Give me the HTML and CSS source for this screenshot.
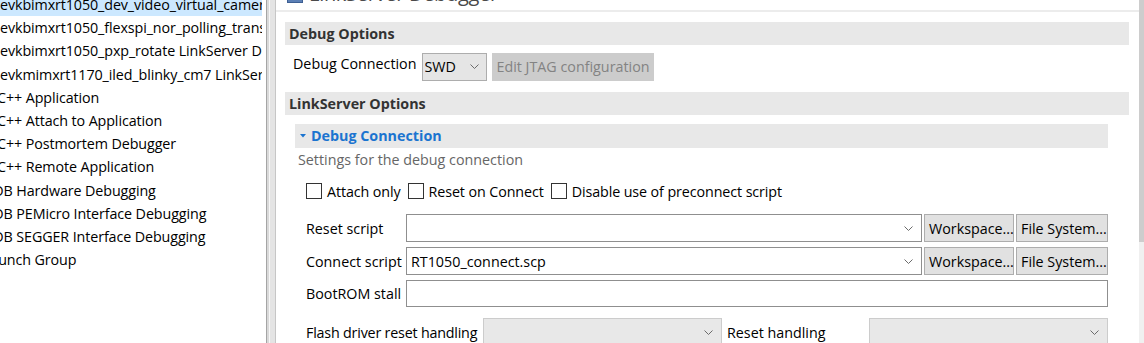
FILE: index.html
```html
<!DOCTYPE html>
<html lang="en">
<head>
<meta charset="utf-8">
<title>LinkServer Debugger</title>
<link rel="stylesheet" href="styles.css">
</head>
<body>
<div class="window">
  <aside class="tree">
    <ul class="tree-list">
      <li class="tree-item child selected">evkbimxrt1050_dev_video_virtual_camera LinkServer Debug</li>
      <li class="tree-item child">evkbimxrt1050_flexspi_nor_polling_transfer LinkServer Debug</li>
      <li class="tree-item child">evkbimxrt1050_pxp_rotate LinkServer Debug</li>
      <li class="tree-item child">evkmimxrt1170_iled_blinky_cm7 LinkServer Debug</li>
      <li class="tree-item top">C/C++ Application</li>
      <li class="tree-item top">C/C++ Attach to Application</li>
      <li class="tree-item top">C/C++ Postmortem Debugger</li>
      <li class="tree-item top">C/C++ Remote Application</li>
      <li class="tree-item top">GDB Hardware Debugging</li>
      <li class="tree-item top">GDB PEMicro Interface Debugging</li>
      <li class="tree-item top">GDB SEGGER Interface Debugging</li>
      <li class="tree-item top">Launch Group</li>
    </ul>
  </aside>
  <div class="sash"></div>
  <main class="editor">
    <header class="editor-title">
      <svg class="title-icon" width="16" height="16" viewBox="0 0 16 16"><rect x="0.5" y="0.5" width="15" height="15" fill="#5b7fb5" stroke="#3d5f93"/></svg>
      <span class="title-text">LinkServer Debugger</span>
    </header>
    <div class="editor-body">
      <div class="section-bar">Debug Options</div>
      <div class="option-row">
        <span class="option-label">Debug Connection</span>
        <div class="combo combo-swd"><span class="combo-value">SWD</span><svg class="chev" width="9" height="5" viewBox="0 0 9 5"><path d="M0.5 0.5L4.5 4.5L8.5 0.5" fill="none" stroke="#6b6b6b"/></svg></div>
        <button class="btn btn-disabled">Edit JTAG configuration</button>
      </div>
      <div class="section-bar">LinkServer Options</div>
      <section class="subsection">
        <div class="sub-bar"><svg class="twisty" width="6" height="4" viewBox="0 0 6 4"><path d="M0 0H6L3 3.5Z" fill="#1b74d0"/></svg>Debug Connection</div>
        <p class="sub-desc">Settings for the debug connection</p>
        <div class="check-row">
          <label class="check"><span class="box"></span>Attach only</label>
          <label class="check"><span class="box"></span>Reset on Connect</label>
          <label class="check"><span class="box"></span>Disable use of preconnect script</label>
        </div>
        <div class="field-grid">
          <span class="field-label">Reset script</span>
          <div class="combo combo-edit"><span class="combo-value"></span><svg class="chev" width="9" height="5" viewBox="0 0 9 5"><path d="M0.5 0.5L4.5 4.5L8.5 0.5" fill="none" stroke="#6b6b6b"/></svg></div>
          <button class="btn">Workspace...</button>
          <button class="btn">File System...</button>

          <span class="field-label">Connect script</span>
          <div class="combo combo-edit"><span class="combo-value">RT1050_connect.scp</span><svg class="chev" width="9" height="5" viewBox="0 0 9 5"><path d="M0.5 0.5L4.5 4.5L8.5 0.5" fill="none" stroke="#6b6b6b"/></svg></div>
          <button class="btn">Workspace...</button>
          <button class="btn">File System...</button>

          <span class="field-label">BootROM stall</span>
          <div class="text-field wide"></div>
        </div>
        <div class="handling-row">
          <span class="field-label tight">Flash driver reset handling</span>
          <div class="combo combo-disabled"><span class="combo-value"></span><svg class="chev" width="9" height="5" viewBox="0 0 9 5"><path d="M0.5 0.5L4.5 4.5L8.5 0.5" fill="none" stroke="#6b6b6b"/></svg></div>
          <span class="field-label">Reset handling</span>
          <div class="combo combo-disabled"><span class="combo-value"></span><svg class="chev" width="9" height="5" viewBox="0 0 9 5"><path d="M0.5 0.5L4.5 4.5L8.5 0.5" fill="none" stroke="#6b6b6b"/></svg></div>
        </div>
      </section>
    </div>
  </main>
  <div class="vscroll"><div class="thumb"></div></div>
</div>
</body>
</html>
```

FILE: styles.css
```css
* { box-sizing: border-box; }

html, body {
  margin: 0;
  padding: 0;
  width: 1144px;
  height: 343px;
  overflow: hidden;
  background: #ffffff;
}

body {
  font-family: "Open Sans", "Noto Sans", sans-serif;
  font-size: 14.3px;
  color: #000000;
}

.window {
  display: flex;
  width: 1144px;
  height: 343px;
  overflow: hidden;
}

/* ---------- left tree ---------- */
.tree {
  flex: none;
  width: 267px;
  border-right: 1px solid #a5a5a5;
  overflow: hidden;
  background: #ffffff;
}

.tree-list {
  list-style: none;
  margin: -7px 0 0 0;
  padding: 0;
  width: 262px;
  letter-spacing: -0.1px;
}

.tree-item {
  height: 23.2px;
  line-height: 23.2px;
  white-space: nowrap;
  overflow: hidden;
}

.tree-item.child { text-indent: 0; }
.tree-item.top { text-indent: -17px; }
.tree-item.selected { background: #cce8ff; }

/* ---------- sash ---------- */
.sash {
  flex: none;
  width: 8px;
  background: linear-gradient(to right, #d9d9d9 0, #d9d9d9 2px, #f7f7f7 2px, #f7f7f7 3px, #e4e4e4 3px, #e4e4e4 8px);
}

/* ---------- editor ---------- */
.editor {
  flex: 1;
  min-width: 0;
  border-left: 1px solid #c6c6c6;
  display: flex;
  flex-direction: column;
  overflow: hidden;
}

.editor-title {
  flex: none;
  height: 12px;
  border-bottom: 2px solid #ececec;
  display: flex;
  align-items: flex-start;
  padding-left: 11px;
  gap: 6px;
  overflow: hidden;
}

.title-icon {
  flex: none;
  margin-top: -13px;
}

.title-text {
  font-size: 20px;
  line-height: 20px;
  margin-top: -16px;
  color: #4a4a4a;
  white-space: nowrap;
  letter-spacing: -0.3px;
}

.editor-body {
  flex: none;
  padding: 10px 10px 0 9px;
}

.section-bar {
  height: 23px;
  line-height: 23px;
  background: #e8e8e8;
  padding-left: 4px;
  font-weight: 700;
  color: #333333;
}

.option-row {
  display: flex;
  align-items: center;
  gap: 5px;
  padding-left: 8px;
  margin: 7px 0 11px 0;
  height: 29px;
}

.option-label {
  align-self: flex-start;
  line-height: 24px;
}

.combo {
  display: flex;
  align-items: center;
  height: 28px;
  border: 1px solid #8f8f8f;
  background: #ffffff;
  padding: 0 8px 0 4px;
}

.combo-value {
  flex: 1;
  white-space: nowrap;
  overflow: hidden;
}

.chev { flex: none; }

.combo-swd {
  width: 65px;
  background: #e5e5e5;
  border-color: #adadad;
  padding-left: 2px;
  padding-right: 7px;
}

.combo-disabled {
  background: #e8e8e8;
  border-color: #cccccc;
}

.btn {
  font: inherit;
  height: 28px;
  border: 1px solid #adadad;
  background: #e1e1e1;
  color: #000000;
  padding: 0 4px;
  white-space: nowrap;
}

.btn-disabled {
  width: 162px;
  border-color: #cccccc;
  background: #cccccc;
  color: #838383;
}

/* ---------- sub section ---------- */
.subsection {
  margin: 9px 9px 0 10px;
  padding: 0 12px 0 0;
}

.sub-bar {
  height: 24px;
  line-height: 24px;
  background: #e8e8e8;
  display: flex;
  align-items: center;
  padding-left: 5px;
  gap: 5px;
  font-weight: 700;
  color: #1b74d0;
}

.sub-desc {
  margin: 0;
  padding-left: 3px;
  height: 24px;
  line-height: 24px;
  color: #666666;
}

.check-row {
  display: flex;
  align-items: center;
  gap: 7px;
  height: 28px;
  margin: 5px 0 0 11px;
}

.check {
  display: flex;
  align-items: center;
  gap: 5px;
  white-space: nowrap;
  letter-spacing: -0.1px;
}

.box {
  width: 16px;
  height: 16px;
  border: 1px solid #333333;
  background: #ffffff;
}

.field-grid {
  display: grid;
  grid-template-columns: 98px 1fr 90px 92px;
  column-gap: 2px;
  row-gap: 5px;
  align-items: center;
  margin: 9px 0 0 11px;
}

.field-grid .combo,
.field-grid .btn { height: 28px; }

.field-label { white-space: nowrap; }
.field-label.tight { letter-spacing: -0.2px; }

.text-field {
  height: 27px;
  border: 1px solid #8f8f8f;
  background: #ffffff;
}

.text-field.wide { grid-column: 2 / -1; }

.handling-row {
  display: grid;
  grid-template-columns: 172px 239px 137px 1fr;
  column-gap: 5px;
  align-items: center;
  margin: 11px 0 0 11px;
}
.handling-row .combo { height: 28px; }

/* ---------- scrollbar ---------- */
.vscroll {
  flex: none;
  width: 5px;
  background: #f0f0f0;
}

.thumb {
  height: 242px;
  background: #cdcdcd;
}
```
